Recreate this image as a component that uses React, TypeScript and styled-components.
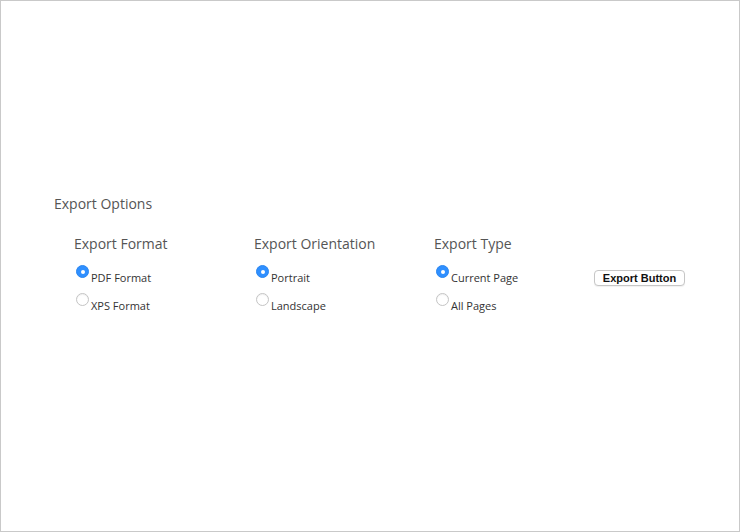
import React, { useState } from "react";
import styled, { createGlobalStyle } from "styled-components";

const GlobalStyle = createGlobalStyle`
  html, body {
    margin: 0;
    padding: 0;
    background: #ffffff;
  }
`;

const Page = styled.div`
  box-sizing: border-box;
  width: 740px;
  height: 532px;
  border: 1px solid #c9c9c9;
  padding: 193px 0 0 53px;
  font-family: "Open Sans", "Liberation Sans", sans-serif;
`;

const Title = styled.div`
  font-size: 14px;
  line-height: 20px;
  color: #555;
`;

const Columns = styled.div`
  display: flex;
  margin-top: 20px;
  padding-left: 20px;
`;

const Column = styled.div`
  width: 180px;
`;

const ColumnTitle = styled.div`
  font-size: 14px;
  line-height: 20px;
  color: #555;
  margin-bottom: 11px;
`;

const Option = styled.label`
  display: flex;
  align-items: flex-start;
  height: 28px;
  cursor: pointer;
`;

const Dot = styled.span<{ checked: boolean }>`
  box-sizing: border-box;
  width: 13px;
  height: 13px;
  margin: 0 2px 0 2px;
  border-radius: 50%;
  flex-shrink: 0;
  position: relative;
  background: ${({ checked }) => (checked ? "#2f8fff" : "#fff")};
  border: 1px solid ${({ checked }) => (checked ? "#2a86f0" : "#c4c4c4")};
  box-shadow: ${({ checked }) =>
    checked ? "none" : "inset 0 1px 1px rgba(0,0,0,0.06)"};

  &::after {
    content: "";
    display: ${({ checked }) => (checked ? "block" : "none")};
    position: absolute;
    left: 50%;
    top: 50%;
    width: 4px;
    height: 4px;
    margin: -2px 0 0 -2px;
    border-radius: 50%;
    background: #fff;
  }
`;

const OptionText = styled.span`
  font-size: 11px;
  line-height: 16px;
  padding-top: 5px;
  color: #333;
`;

const ButtonColumn = styled.div`
  padding-top: 31px;
  margin-left: -20px;
`;

const ExportButton = styled.button`
  box-sizing: border-box;
  width: 91px;
  height: 16px;
  padding: 0;
  border: 1px solid #c6c6c6;
  border-radius: 4px;
  background: #fff;
  box-shadow: 0 1px 1px rgba(0, 0, 0, 0.06);
  font-family: "Liberation Sans", Arial, sans-serif;
  font-size: 11px;
  font-weight: bold;
  line-height: 14px;
  color: #111;
  cursor: pointer;
`;

type Group = {
  title: string;
  options: string[];
};

const groups: Group[] = [
  { title: "Export Format", options: ["PDF Format", "XPS Format"] },
  { title: "Export Orientation", options: ["Portrait", "Landscape"] },
  { title: "Export Type", options: ["Current Page", "All Pages"] },
];

const App: React.FC = () => {
  const [selected, setSelected] = useState<number[]>([0, 0, 0]);

  const choose = (group: number, option: number) => {
    setSelected((prev) => prev.map((v, i) => (i === group ? option : v)));
  };

  return (
    <>
      <GlobalStyle />
      <Page>
        <Title>Export Options</Title>
        <Columns>
          {groups.map((group, gi) => (
            <Column key={group.title}>
              <ColumnTitle>{group.title}</ColumnTitle>
              {group.options.map((opt, oi) => (
                <Option key={opt} onClick={() => choose(gi, oi)}>
                  <Dot checked={selected[gi] === oi} />
                  <OptionText>{opt}</OptionText>
                </Option>
              ))}
            </Column>
          ))}
          <ButtonColumn>
            <ExportButton>Export Button</ExportButton>
          </ButtonColumn>
        </Columns>
      </Page>
    </>
  );
};

export default App;
